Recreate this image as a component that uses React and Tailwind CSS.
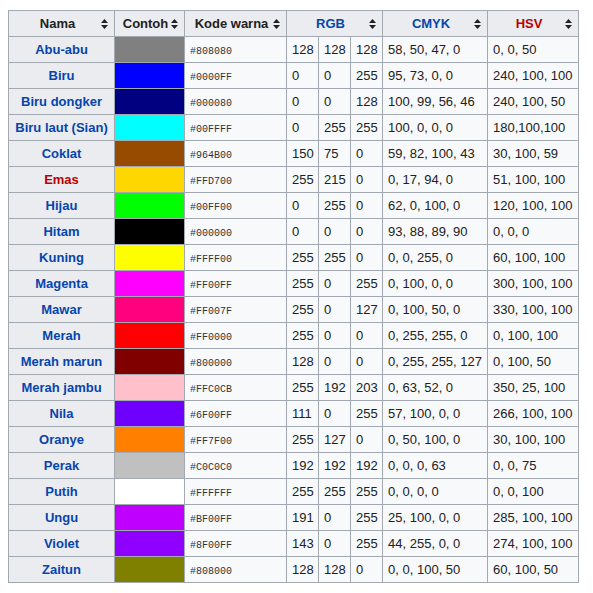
import React from "react";

const rows = [
  ["Abu-abu", "#808080", "128", "128", "128", "58, 50, 47, 0", "0, 0, 50"],
  ["Biru", "#0000FF", "0", "0", "255", "95, 73, 0, 0", "240, 100, 100"],
  ["Biru dongker", "#000080", "0", "0", "128", "100, 99, 56, 46", "240, 100, 50"],
  ["Biru laut (Sian)", "#00FFFF", "0", "255", "255", "100, 0, 0, 0", "180,100,100"],
  ["Coklat", "#964B00", "150", "75", "0", "59, 82, 100, 43", "30, 100, 59"],
  ["Emas", "#FFD700", "255", "215", "0", "0, 17, 94, 0", "51, 100, 100", true],
  ["Hijau", "#00FF00", "0", "255", "0", "62, 0, 100, 0", "120, 100, 100"],
  ["Hitam", "#000000", "0", "0", "0", "93, 88, 89, 90", "0, 0, 0"],
  ["Kuning", "#FFFF00", "255", "255", "0", "0, 0, 255, 0", "60, 100, 100"],
  ["Magenta", "#FF00FF", "255", "0", "255", "0, 100, 0, 0", "300, 100, 100"],
  ["Mawar", "#FF007F", "255", "0", "127", "0, 100, 50, 0", "330, 100, 100"],
  ["Merah", "#FF0000", "255", "0", "0", "0, 255, 255, 0", "0, 100, 100"],
  ["Merah marun", "#800000", "128", "0", "0", "0, 255, 255, 127", "0, 100, 50"],
  ["Merah jambu", "#FFC0CB", "255", "192", "203", "0, 63, 52, 0", "350, 25, 100"],
  ["Nila", "#6F00FF", "111", "0", "255", "57, 100, 0, 0", "266, 100, 100"],
  ["Oranye", "#FF7F00", "255", "127", "0", "0, 50, 100, 0", "30, 100, 100"],
  ["Perak", "#C0C0C0", "192", "192", "192", "0, 0, 0, 63", "0, 0, 75"],
  ["Putih", "#FFFFFF", "255", "255", "255", "0, 0, 0, 0", "0, 0, 100"],
  ["Ungu", "#BF00FF", "191", "0", "255", "25, 100, 0, 0", "285, 100, 100"],
  ["Violet", "#8F00FF", "143", "0", "255", "44, 255, 0, 0", "274, 100, 100"],
  ["Zaitun", "#808000", "128", "128", "0", "0, 0, 100, 50", "60, 100, 50"],
];

function SortIcon() {
  return (
    <svg width="7" height="10" viewBox="0 0 7 10" className="shrink-0">
      <polygon points="0,4 3.5,0 7,4" fill="#202122" />
      <polygon points="0,6 3.5,10 7,6" fill="#202122" />
    </svg>
  );
}

function Head({ children, colSpan, color = "text-[#202122]" }) {
  return (
    <th
      colSpan={colSpan}
      className="border border-[#a2a9b1] bg-[#eaecf0] p-0 font-bold"
    >
      <div className="flex items-center pl-[5px] pr-[6px]">
        <span className={`flex-1 text-center ${color}`}>{children}</span>
        <SortIcon />
      </div>
    </th>
  );
}

const td = "border border-[#a2a9b1] bg-[#f8f9fa] px-[5px] py-0 text-left align-middle";

export default function App() {
  return (
    <div
      className="pl-[8px] pt-[10px] text-[13px] text-[#202122]"
      style={{ fontFamily: '"Liberation Sans", Arial, sans-serif' }}
    >
      <table className="table-fixed border-collapse w-[570px]">
        <colgroup>
          <col className="w-[106px]" />
          <col className="w-[70px]" />
          <col className="w-[102px]" />
          <col className="w-[32px]" />
          <col className="w-[32px]" />
          <col className="w-[32px]" />
          <col className="w-[105px]" />
          <col className="w-[91px]" />
        </colgroup>
        <thead>
          <tr className="h-[26px]">
            <Head>Nama</Head>
            <Head>Contoh</Head>
            <Head>Kode warna</Head>
            <Head colSpan={3} color="text-[#0645ad]">RGB</Head>
            <Head color="text-[#0645ad]">CMYK</Head>
            <Head color="text-[#ba0000]">HSV</Head>
          </tr>
        </thead>
        <tbody>
          {rows.map((r) => (
            <tr key={r[0]} className="h-[26px]">
              <th
                className={`border border-[#a2a9b1] bg-[#eaecf0] p-0 text-center font-bold whitespace-nowrap ${
                  r[7] ? "text-[#ba0000]" : "text-[#0645ad]"
                }`}
              >
                {r[0]}
              </th>
              <td
                className="border border-[#a2a9b1] p-0"
                style={{ backgroundColor: r[1] }}
              ></td>
              <td className={td}>
                <span
                  className="text-[10px] text-[#333]"
                  style={{ fontFamily: '"Liberation Mono", "Courier New", monospace' }}
                >
                  {r[1]}
                </span>
              </td>
              <td className={td}>{r[2]}</td>
              <td className={td}>{r[3]}</td>
              <td className={td}>{r[4]}</td>
              <td className={td}>{r[5]}</td>
              <td className={`${td} whitespace-nowrap`}>{r[6]}</td>
            </tr>
          ))}
        </tbody>
      </table>
    </div>
  );
}
